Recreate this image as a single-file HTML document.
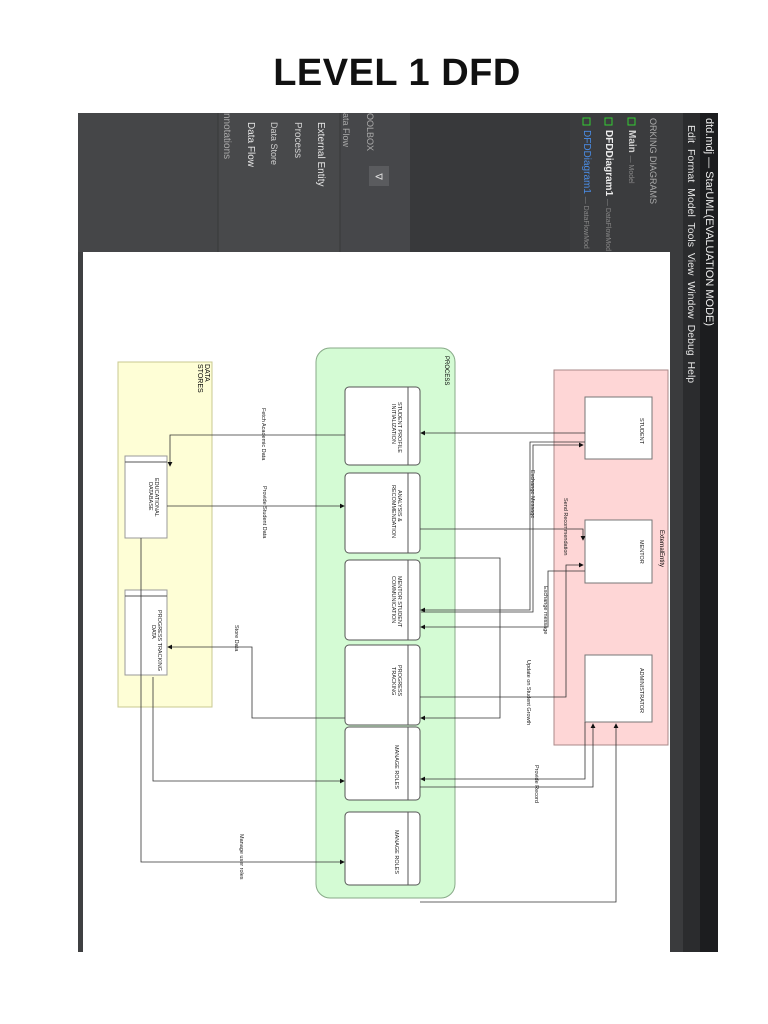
<!DOCTYPE html>
<html><head><meta charset="utf-8"><style>
body{margin:0;background:#fff;width:768px;height:1024px;overflow:hidden;font-family:"Liberation Sans",sans-serif}
h1{position:absolute;left:13px;width:768px;top:52px;margin:0;text-align:center;font-size:38px;font-weight:bold;color:#111;letter-spacing:0.5px}
svg{position:absolute;left:0;top:0}
</style></head><body>
<h1>LEVEL 1 DFD</h1>
<svg width="768" height="1024" viewBox="0 0 768 1024" font-family="Liberation Sans, sans-serif">
<defs><marker id="a" markerWidth="6" markerHeight="6" refX="5" refY="3" orient="auto"><path d="M0,0 L6,3 L0,6z" fill="#111"/></marker></defs>
<rect x="78" y="113" width="640" height="839" fill="#3f4042"/>
<rect x="78" y="113" width="140" height="139" fill="#454648"/>
<rect x="218" y="113" width="122" height="139" fill="#48494b"/>
<rect x="340" y="113" width="70" height="139" fill="#46474a"/>
<rect x="410" y="113" width="160" height="139" fill="#38393b"/>
<rect x="570" y="113" width="100" height="139" fill="#3b3c3e"/>
<rect x="670" y="113" width="13" height="839" fill="#3a3b3d"/>
<rect x="683" y="113" width="17" height="839" fill="#2b2c2e"/>
<rect x="700" y="113" width="18" height="839" fill="#1c1d1f"/>
<rect x="83" y="252" width="587" height="700" fill="#fff"/>
<line x1="218" y1="113" x2="218" y2="252" stroke="#38393a"/>
<line x1="340" y1="113" x2="340" y2="252" stroke="#38393a"/>
<rect x="369" y="166" width="20" height="20" fill="#5a5b5e"/>
<text x="379" y="180" fill="#ddd" font-size="11" text-anchor="middle">⊲</text>
<g fill="#d0d0d0" font-size="10">
<text transform="translate(706,118) rotate(90)" fill="#eee" font-size="11">dtd.mdj — StarUML(EVALUATION MODE)</text>
<text transform="translate(688,125) rotate(90)" font-size="10.5" fill="#e5e5e5" word-spacing="3">Edit Format Model Tools View Window Debug Help</text>
<text transform="translate(650,118) rotate(90)" fill="#aaa" font-size="9">ORKING DIAGRAMS</text>
<rect x="628" y="118" width="7" height="7" fill="none" stroke="#3c3"/>
<text transform="translate(629,130) rotate(90)" font-weight="bold">Main <tspan fill="#888" font-size="7" font-weight="normal">— Model</tspan></text>
<rect x="605" y="118" width="7" height="7" fill="none" stroke="#3c3"/>
<text transform="translate(606,130) rotate(90)" font-weight="bold" fill="#eee">DFDDiagram1 <tspan fill="#888" font-size="7" font-weight="normal">— DataFlowMod</tspan></text>
<rect x="583" y="118" width="7" height="7" fill="none" stroke="#3c3"/>
<text transform="translate(584,130) rotate(90)" fill="#4a8ee8">DFDDiagram1 <tspan fill="#888" font-size="7">— DataFlowMod</tspan></text>
<text transform="translate(367,113) rotate(90)" fill="#aaa" font-size="9">OOLBOX</text>
<text transform="translate(343,113) rotate(90)" fill="#aaa" font-size="9">ata Flow</text>
<text transform="translate(318,122) rotate(90)" fill="#e5e5e5">External Entity</text>
<text transform="translate(295,122) rotate(90)">Process</text>
<text transform="translate(271,122) rotate(90)" font-size="9">Data Store</text>
<text transform="translate(248,122) rotate(90)" fill="#e5e5e5">Data Flow</text>
<text transform="translate(224,113) rotate(90)" fill="#aaa">nnotations</text>
</g>
<rect x="118" y="362" width="94" height="345" fill="#fefed6" stroke="#c8c890"/>
<text transform="translate(205,364) rotate(90)" font-size="7">DATA</text>
<text transform="translate(198,364) rotate(90)" font-size="7">STORES</text>
<rect x="316" y="348" width="139" height="550" rx="14" fill="#d4fbd4" stroke="#8a8"/>
<text transform="translate(445,356) rotate(90)" font-size="6">PROCESS</text>
<rect x="554" y="370" width="114" height="375" fill="#fed6d6" stroke="#aa8888"/>
<text transform="translate(660,530) rotate(90)" font-size="6">ExternalEntity</text>
<g fill="#fff" stroke="#555">
<rect x="345" y="387" width="75" height="78" rx="4"/>
<rect x="345" y="473" width="75" height="80" rx="4"/>
<rect x="345" y="560" width="75" height="80" rx="4"/>
<rect x="345" y="645" width="75" height="80" rx="4"/>
<rect x="345" y="727" width="75" height="73" rx="4"/>
<rect x="345" y="812" width="75" height="73" rx="4"/>
<rect x="585" y="397" width="67" height="62" stroke="#777"/>
<rect x="585" y="520" width="67" height="63" stroke="#777"/>
<rect x="585" y="655" width="67" height="67" stroke="#777"/>
<rect x="125" y="456" width="42" height="82" stroke="#999"/>
<rect x="125" y="590" width="42" height="85" stroke="#999"/>
</g>
<g stroke="#555"><line x1="408" y1="387" x2="408" y2="465"/><line x1="408" y1="473" x2="408" y2="553"/><line x1="408" y1="560" x2="408" y2="640"/><line x1="408" y1="645" x2="408" y2="725"/><line x1="408" y1="727" x2="408" y2="800"/><line x1="408" y1="812" x2="408" y2="885"/>
<line x1="125" y1="462" x2="167" y2="462"/><line x1="125" y1="596" x2="167" y2="596"/></g>
<g font-size="5.5" fill="#222">
<text transform="translate(398,402) rotate(90)">STUDENT PROFILE</text><text transform="translate(392,404) rotate(90)">INITIALIZATION</text>
<text transform="translate(398,490) rotate(90)">ANALYSIS &amp;</text><text transform="translate(392,485) rotate(90)">RECOMMENDATION</text>
<text transform="translate(398,576) rotate(90)">MENTOR STUDENT</text><text transform="translate(392,576) rotate(90)">COMMUNICATION</text>
<text transform="translate(398,665) rotate(90)">PROGRESS</text><text transform="translate(392,667) rotate(90)">TRACKING</text>
<text transform="translate(395,745) rotate(90)">MANAGE ROLES</text>
<text transform="translate(395,830) rotate(90)">MANAGE ROLES</text>
<text transform="translate(640,418) rotate(90)">STUDENT</text>
<text transform="translate(640,540) rotate(90)">MENTOR</text>
<text transform="translate(640,668) rotate(90)">ADMINISTRATOR</text>
<text transform="translate(155,478) rotate(90)">EDUCATIONAL</text><text transform="translate(149,482) rotate(90)">DATABASE</text>
<text transform="translate(158,610) rotate(90)">PROGRESS TRACKING</text><text transform="translate(152,625) rotate(90)">DATA</text>
<text transform="translate(262,408) rotate(90)">Fetch Academic Data</text>
<text transform="translate(263,486) rotate(90)">Provide Student Data</text>
<text transform="translate(235,625) rotate(90)">Store Data</text>
<text transform="translate(240,834) rotate(90)">Manage user roles</text>
<text transform="translate(531,470) rotate(90)">Exchange Message</text>
<text transform="translate(564,498) rotate(90)">Send Recommendation</text>
<text transform="translate(544,586) rotate(90)">Exchange message</text>
<text transform="translate(527,660) rotate(90)">Update on Student Growth</text>
<text transform="translate(535,765) rotate(90)">Provide Record</text>
</g>
<g fill="none" stroke="#333" stroke-width="0.8" marker-end="url(#a)">
<path d="M585,433 H421"/>
<path d="M345,435 H170 V466"/>
<path d="M167,506 H344"/>
<path d="M420,529 H583 V540"/>
<path d="M420,558 H500 V718 H421"/>
<path d="M585,442 H530 V610 H421"/>
<path d="M421,612 H533 V445 H583"/>
<path d="M585,571 H548 V627 H421"/>
<path d="M420,697 H566 V565 H583"/>
<path d="M345,718 H252 V647 H168"/>
<path d="M153,677 V781 H344"/>
<path d="M141,538 V862 H344"/>
<path d="M585,722 V779 H421"/>
<path d="M420,787 H593 V724"/>
<path d="M420,902 H616 V724"/>
</g>
</svg>
</body></html>
